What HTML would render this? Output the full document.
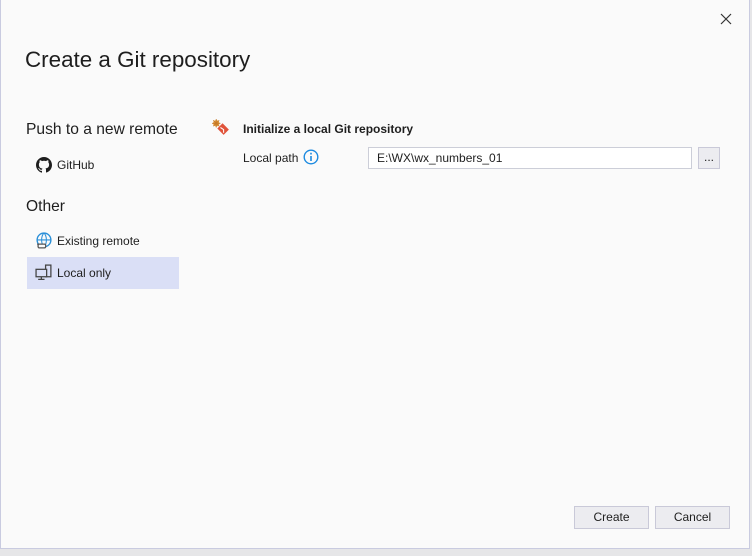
<!DOCTYPE html>
<html><head><style>
*{margin:0;padding:0;box-sizing:border-box}
body{width:752px;height:556px;background:#e6e6e8;position:relative;overflow:hidden;font-family:"Liberation Sans",sans-serif;color:#1e1e1e}
#win{position:absolute;left:0;top:0;width:750px;height:549px;background:#fafafa;border:1px solid #c9cbe0;border-top:none}
.a{position:absolute;white-space:nowrap}
.btn{position:absolute;height:23px;background:#ececf0;border:1px solid #c9c9d8;font-size:12px;text-align:center;line-height:21px}
</style></head><body>
<div id="win">
<div class="a" style="left:24px;top:47px;font-size:22.4px;color:#1e1e1e">Create a Git repository</div>
<svg class="a" style="left:719px;top:13px" width="12" height="12"><path d="M1 1L11 11M11 1L1 11" stroke="#333" stroke-width="1.2"/></svg>
<div class="a" style="left:25px;top:121px;font-size:15.6px">Push to a new remote</div>
<svg class="a" style="left:35px;top:157px" width="16" height="16" viewBox="0 0 16 16"><path fill="#1e1e1e" d="M8 0C3.6 0 0 3.6 0 8c0 3.5 2.3 6.5 5.5 7.6.4.1.5-.2.5-.4v-1.4c-2.2.5-2.7-1-2.7-1-.4-.9-.9-1.2-.9-1.2-.7-.5.1-.5.1-.5.8.1 1.2.8 1.2.8.7 1.2 1.9.9 2.3.7.1-.5.3-.9.5-1.1-1.8-.2-3.600-.9-3.6-4 0-.9.3-1.6.8-2.1-.1-.2-.4-1 .1-2.1 0 0 .7-.2 2.200.8.6-.2 1.3-.3 2-.3s1.4.1 2 .3c1.5-1 2.2-.8 2.2-.8.4 1.1.2 1.9.1 2.1.5.6.8 1.3.8 2.1 0 3.1-1.9 3.700-3.6 3.9.3.3.5.8.5 1.5v2.2c0 .2.1.5.6.4C13.700 14.5 16 11.5 16 8c0-4.4-3.6-8-8-8z"/></svg>
<div class="a" style="left:56px;top:158px;font-size:12px">GitHub</div>
<div class="a" style="left:25px;top:198px;font-size:15.6px">Other</div>
<svg class="a" style="left:34px;top:232px" width="18" height="18" viewBox="0 0 17 17"><circle cx="8.5" cy="7.5" r="6.5" fill="none" stroke="#2a8fd8" stroke-width="1.3"/><path d="M2 7.5h13M8.5 1c-3 3-3 10 0 13M8.5 1c3 3 3 10 0 13" fill="none" stroke="#2a8fd8" stroke-width="1"/><path d="M2 11.5h7c1.5 0 1.5 3.5 0 3.5H4c-1.5 0-1.5-3.5 0-3.5" fill="#fafafa" stroke="#555" stroke-width="1.2"/></svg>
<div class="a" style="left:56px;top:234px;font-size:12px">Existing remote</div>
<div class="a" style="left:26px;top:257px;width:152px;height:32px;background:#dadff6"></div>
<svg class="a" style="left:34px;top:264px" width="18" height="17" viewBox="0 0 17 16"><rect x="10" y="1" width="5" height="11" fill="none" stroke="#444" stroke-width="1.2"/><rect x="1" y="5" width="10" height="7" fill="#dadff6" stroke="#444" stroke-width="1.2"/><path d="M3 14.5h6M6 12v2.5" stroke="#444" stroke-width="1.2"/></svg>
<div class="a" style="left:56px;top:266px;font-size:12px">Local only</div>
<svg class="a" style="left:211px;top:119px" width="19" height="17" viewBox="0 0 18 16"><circle cx="4" cy="4" r="3" fill="#e59a3a"/><path d="M4 0v8M0 4h8M1.2 1.2l5.6 5.6M6.8 1.2L1.2 6.8" stroke="#c47a2a" stroke-width=".8"/><path d="M10 4l6 6-5 5-6-6z" fill="#e0533a"/><path d="M8 8l3 2v3" stroke="#fff" stroke-width="1" fill="none"/></svg>
<div class="a" style="left:242px;top:122px;font-size:12px;font-weight:bold">Initialize a local Git repository</div>
<div class="a" style="left:242px;top:151px;font-size:12px">Local path</div>
<svg class="a" style="left:302px;top:149px" width="16" height="16"><circle cx="8" cy="8" r="6.8" fill="none" stroke="#1c8ae0" stroke-width="1.4"/><path d="M8 7v5M8 3.8v1.7" stroke="#1c8ae0" stroke-width="1.6"/></svg>
<div class="a" style="left:367px;top:147px;width:324px;height:22px;background:#fff;border:1px solid #ccced8;font-size:12px;line-height:20px;padding-left:8px">E:\WX\wx_numbers_01</div>
<div class="btn" style="left:697px;top:147px;width:22px;height:22px;line-height:18px">...</div>
<div class="btn" style="left:573px;top:506px;width:75px">Create</div>
<div class="btn" style="left:654px;top:506px;width:75px">Cancel</div>
</div>
</body></html>
